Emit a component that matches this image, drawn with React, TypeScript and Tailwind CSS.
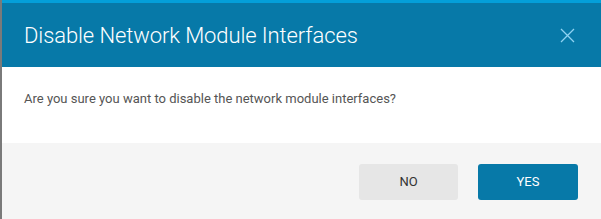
export default function App() {
  return (
    <div className="flex h-[219px] w-[601px] overflow-hidden bg-[#f5f5f5]" style={{ fontFamily: "Roboto, 'Liberation Sans', sans-serif" }}>
      {/* backdrop edge */}
      <div className="w-[2px] shrink-0 bg-[#7a7a7a]" />

      <div className="flex flex-1 flex-col">
        <div className="h-[3px] bg-[#049fd9]" />

        {/* header */}
        <div className="flex h-[64px] items-center justify-between bg-[#0779a8] pl-[22px] pr-[26px]">
          <h2 className="text-[22px] font-light tracking-[-0.1px] text-white">Disable Network Module Interfaces</h2>
          <svg width="15" height="15" viewBox="0 0 15 15" className="text-[#8fd3f2]">
            <path d="M1 1 L14 14 M14 1 L1 14" stroke="currentColor" strokeWidth="1.3" />
          </svg>
        </div>

        {/* body */}
        <div className="h-[76px] bg-white pl-[22px] pt-[24px]">
          <p className="text-[13px] leading-[16px] text-[#555]">Are you sure you want to disable the network module interfaces?</p>
        </div>

        {/* footer */}
        <div className="flex flex-1 items-start justify-end gap-[20px] bg-[#f5f5f5] pr-[23px] pt-[21px]">
          <button className="h-[36px] w-[99px] rounded-[3px] bg-[#e6e6e6] text-[13px] text-[#333]">NO</button>
          <button className="h-[36px] w-[100px] rounded-[3px] bg-[#0779a8] text-[13px] text-white">YES</button>
        </div>
      </div>
    </div>
  );
}
